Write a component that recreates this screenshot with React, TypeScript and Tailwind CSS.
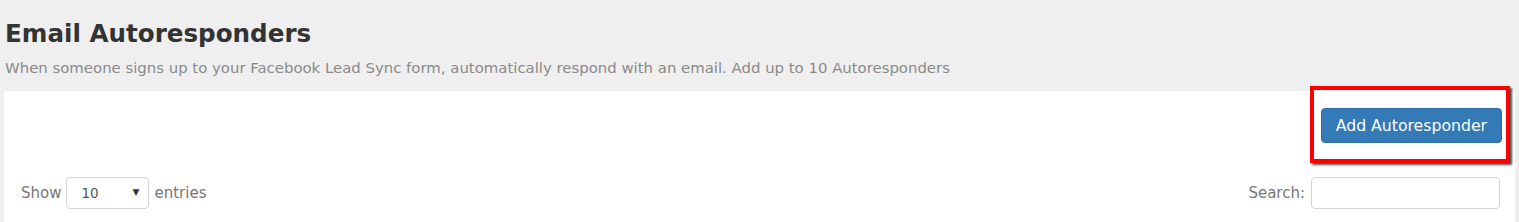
import React from "react";

export default function App() {
  return (
    <div className="min-h-[222px] bg-[#efefef] pl-[4px] pr-[4px] font-['DejaVu_Sans',sans-serif]">
      <div className="px-[1px] pt-[19px]">
        <h1 className="text-[24.6px] font-bold leading-[30px] text-[#333333]">Email Autoresponders</h1>
        <p className="mt-[9px] text-[14.9px] leading-[20px] text-[#8a8a8a]">
          When someone signs up to your Facebook Lead Sync form, automatically respond with an email. Add up to 10 Autoresponders
        </p>
      </div>
      <div className="mt-[13px] bg-white px-[16px] pt-[17px] pb-[20px]">
        <div className="flex justify-end">
          <div className="relative mr-[-3px]">
            <button className="h-[35px] rounded-[4px] border border-[#2e6da4] bg-[#337ab7] px-[14px] text-[15.7px] text-white">
              Add Autoresponder
            </button>
            <div className="pointer-events-none absolute -left-[11px] -right-[8px] -top-[22px] -bottom-[20px] border-[4px] border-[#ff0000] shadow-[2px_2px_2px_rgba(0,0,0,0.7)]" />
          </div>
        </div>
        <div className="mt-[34px] mr-[-1px] flex items-center justify-between">
          <div className="flex items-center gap-[5px] text-[15px] text-[#777777]">
            <span className="ml-[1px]">Show</span>
            <div className="flex h-[32px] w-[83px] items-center justify-between rounded-[4px] border border-[#d5d5d5] pl-[14px] pr-[9px] text-[13.5px] text-[#555555]">
              <span>10</span>
              <span className="text-[9px] text-[#333]">▼</span>
            </div>
            <span>entries</span>
          </div>
          <div className="flex items-center gap-[6px] text-[15px] text-[#777777]">
            <span>Search:</span>
            <div className="h-[32px] w-[189px] rounded-[4px] border border-[#d5d5d5] bg-white" />
          </div>
        </div>
      </div>
    </div>
  );
}
